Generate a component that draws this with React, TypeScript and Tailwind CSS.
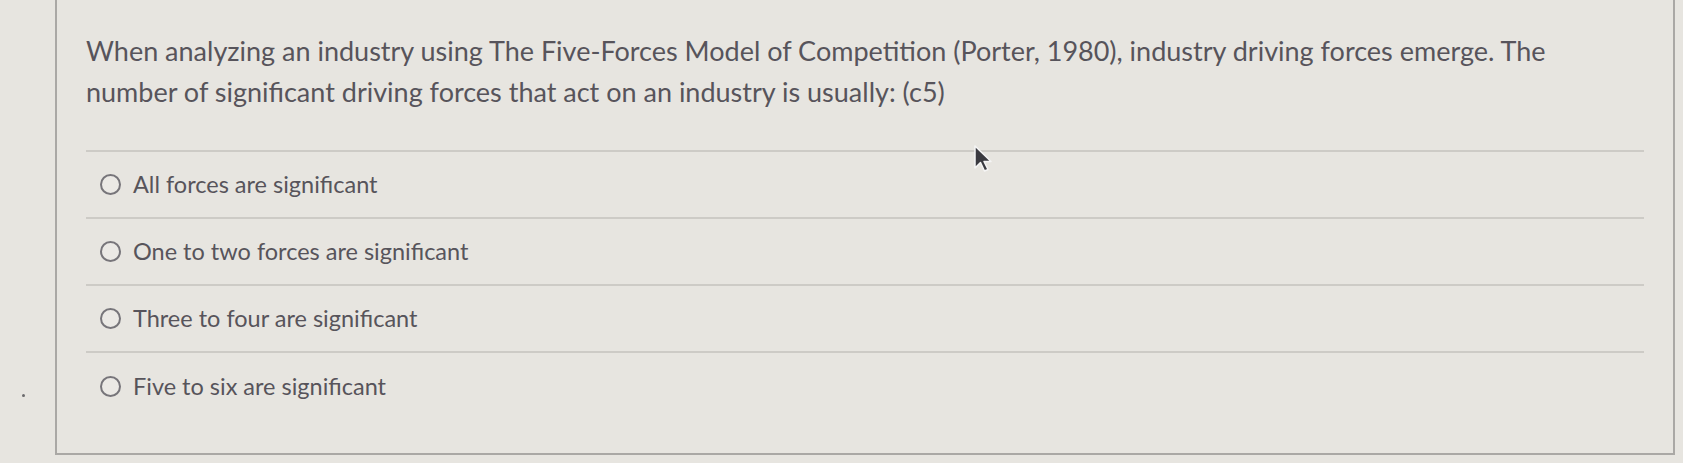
import React from "react";

const options = [
  "All forces are significant",
  "One to two forces are significant",
  "Three to four are significant",
  "Five to six are significant",
];

export default function App() {
  return (
    <div
      className="relative h-[463px] w-[1683px] overflow-hidden bg-[#e7e5e0] text-[#57545b]"
      style={{ fontFamily: "Lato, 'Open Sans', sans-serif" }}
    >
      <div className="absolute left-[22px] top-[394px] h-[3px] w-[3px] rounded-full bg-[#6b6a6c]" />
      <div className="ml-[55px] mt-[-10px] h-[465px] w-[1620px] border-2 border-[#aaa8a5] pl-[29px] pr-[29px]">
        <p className="mt-[38px] w-[1510px] text-[27px] leading-[41px]">
          When analyzing an industry using The Five-Forces Model of Competition (Porter, 1980), industry driving
          forces emerge. The number of significant driving forces that act on an industry is usually: (c5)
        </p>
        <div className="mt-[38px] border-t-2 border-[#cdcbc6]">
          {options.map((o, i) => (
            <div
              key={o}
              className={`flex h-[67px] items-center gap-[12px] pl-[14px] ${
                i < options.length - 1 ? "border-b-2 border-[#cdcbc6]" : ""
              }`}
            >
              <span className="h-[21px] w-[21px] rounded-full border-2 border-[#77757a] bg-[#ebe9e5]" />
              <span className="text-[23.5px]">{o}</span>
            </div>
          ))}
        </div>
      </div>
      <svg
        className="absolute left-[972px] top-[144px]"
        width="22"
        height="30"
        viewBox="0 0 22 30"
      >
        <path
          d="M3 2 L3 24 L8.5 18.5 L12.5 27 L16 25.5 L12 17.5 L19 17.5 Z"
          fill="#3a3a40"
          stroke="#f5f5f5"
          strokeWidth="1.5"
          strokeLinejoin="round"
        />
      </svg>
    </div>
  );
}
